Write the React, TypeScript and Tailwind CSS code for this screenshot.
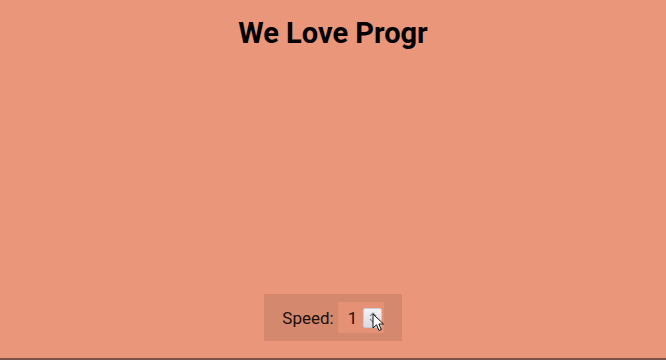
const Spinner = () => (
  <div className="relative ml-[6px] flex h-[20px] w-[19px] items-center justify-center rounded-[2px] border border-[#c9ccd3] bg-gradient-to-b from-[#f3f3f5] to-[#d9dbe0]">
    <svg width="8" height="13" viewBox="0 0 8 13" fill="none" stroke="#8a8d94" strokeWidth="1.2">
      <path d="M1 5 L4 2 L7 5" />
      <path d="M1 8 L4 11 L7 8" />
    </svg>
    <svg className="absolute left-[8px] top-[4px]" width="13" height="19" viewBox="0 0 13 19">
      <path
        d="M1 1 L1 15 L4.5 11.8 L7 17.5 L9.3 16.5 L6.9 11 L11.5 11 Z"
        fill="#fff"
        stroke="#111"
        strokeWidth="1"
        strokeLinejoin="round"
      />
    </svg>
  </div>
);

export default function App() {
  return (
    <div className="flex h-[360px] flex-col bg-[#e9967a] font-['Roboto','Liberation_Sans',sans-serif] text-black">
      <h1 className="pt-[16px] text-center text-[29px] font-bold leading-[34px]">We Love Progr</h1>
      <div className="flex-1" />
      <div className="mb-[17px] flex justify-center">
        <div className="flex items-center bg-[#d4886e] px-[18px] py-[8px]">
          <span className="text-[17px] leading-[20px] text-[#1a0f0b]">Speed:</span>
          <div className="ml-[4px] flex h-[31px] w-[46px] items-center bg-[#e59176] pl-[10px]">
            <span className="text-[17px] leading-[20px] text-[#1a0f0b]">1</span>
            <Spinner />
          </div>
        </div>
      </div>
      <div className="h-[2px] bg-[#7b5247]" />
    </div>
  );
}
